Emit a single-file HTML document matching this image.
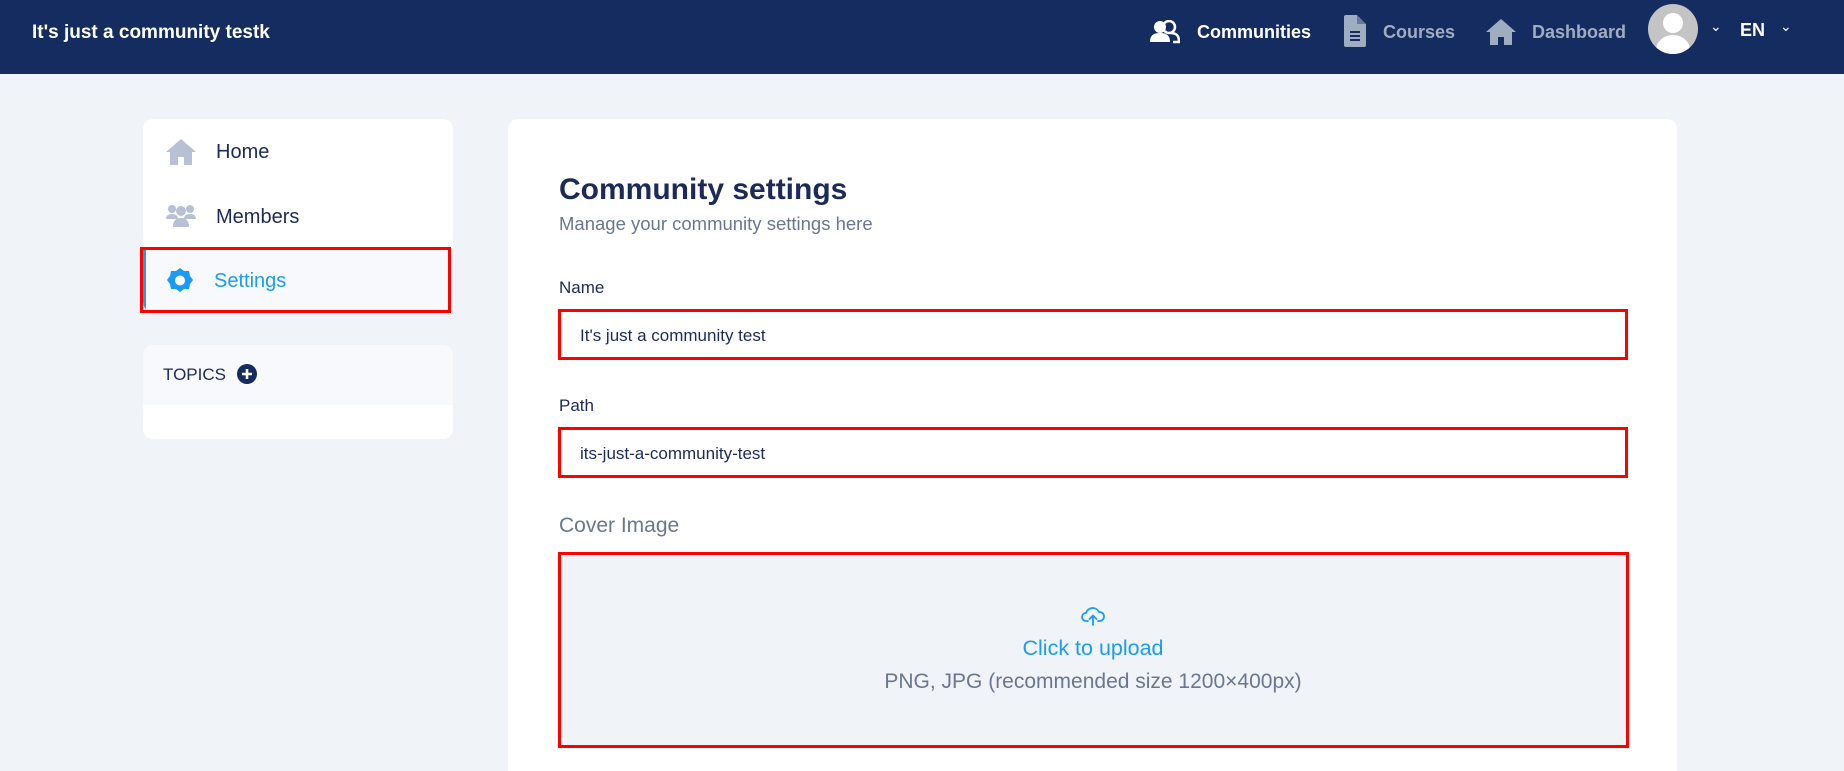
<!DOCTYPE html>
<html><head><meta charset="utf-8"><style>
*{box-sizing:border-box;margin:0;padding:0}
html,body{width:1844px;height:771px;overflow:hidden}
body{background:#f0f3f8;font-family:"Liberation Sans",sans-serif;position:relative;color:#1c2a5a}
.hdr{position:absolute;left:0;top:0;width:1844px;height:74px;background:#152c61}
.abs{position:absolute;white-space:nowrap}
.red{position:absolute;border:3px solid #f00}
</style></head><body>
<div class="hdr"></div>
<div class="abs" style="left:32px;top:22px;color:#fff;font-weight:bold;font-size:19px">It's just a community testk</div>
<svg class="abs" style="left:1150px;top:20px" width="30" height="24" viewBox="0 0 30 24"><circle cx="10" cy="7" r="6" fill="#fff"/><path d="M0 22c0-7 4-9 10-9s10 2 10 9z" fill="#fff"/><circle cx="19" cy="7" r="6" fill="none" stroke="#fff" stroke-width="2.5"/><path d="M20 13c6 0 9 2 9 9h-6" fill="none" stroke="#fff" stroke-width="2.5"/></svg>
<div class="abs" style="left:1197px;top:22px;color:#fff;font-weight:bold;font-size:18px">Communities</div>
<svg class="abs" style="left:1344px;top:15px" width="22" height="32" viewBox="0 0 22 32"><path d="M0 2q0-2 2-2h11l9 9v21q0 2-2 2H2q-2 0-2-2z" fill="#9eadc0"/><path d="M13 0v9h9" fill="#152c61" opacity=".4"/><path d="M6 17h10M6 21h10M6 25h10" stroke="#152c61" stroke-width="2"/></svg>
<div class="abs" style="left:1383px;top:22px;color:#9eadc0;font-weight:bold;font-size:18px">Courses</div>
<svg class="abs" style="left:1486px;top:18px" width="30" height="28" viewBox="0 0 30 28"><path d="M15 1L0 14h4v13h8v-8h6v8h8V14h4z" fill="#9eadc0"/></svg>
<div class="abs" style="left:1532px;top:22px;color:#9eadc0;font-weight:bold;font-size:18px">Dashboard</div>
<svg class="abs" style="left:1648px;top:4px" width="50" height="50" viewBox="0 0 50 50"><clipPath id="c"><circle cx="25" cy="25" r="25"/></clipPath><circle cx="25" cy="25" r="25" fill="#c4c4c4"/><g clip-path="url(#c)" fill="#fff"><circle cx="25" cy="19" r="10"/><ellipse cx="25" cy="46" rx="17" ry="15"/></g></svg>
<div class="abs" style="left:1710px;top:18px;color:#fff;font-size:14px">⌄</div>
<div class="abs" style="left:1740px;top:20px;color:#fff;font-weight:bold;font-size:18px">EN</div>
<div class="abs" style="left:1780px;top:18px;color:#fff;font-size:14px">⌄</div>

<div class="abs" style="left:143px;top:119px;width:310px;height:193px;background:#fff;border-radius:10px;overflow:hidden">
<div style="position:absolute;left:0;top:130px;width:310px;height:63px;background:#f7f9fc;border-left:3px solid #1a9bf5"></div>
</div>
<svg class="abs" style="left:166px;top:138px" width="30" height="28" viewBox="0 0 30 28"><path d="M15 1L0 14h4v13h8v-8h6v8h8V14h4z" fill="#b8c1d3"/></svg>
<div class="abs" style="left:216px;top:141px;font-size:20px;color:#1c2a5a">Home</div>
<svg class="abs" style="left:166px;top:204px" width="30" height="24" viewBox="0 0 30 24"><circle cx="6" cy="5" r="4" fill="#b8c1d3"/><circle cx="24" cy="5" r="4" fill="#b8c1d3"/><circle cx="15" cy="7" r="5" fill="#b8c1d3"/><path d="M0 15q0-5 6-5t6 5z M18 15q0-5 6-5t6 5z M7 23q0-9 8-9t8 9z" fill="#b8c1d3"/></svg>
<div class="abs" style="left:216px;top:206px;font-size:20px;color:#1c2a5a">Members</div>
<svg class="abs" style="left:166px;top:267px" width="28" height="28" viewBox="0 0 28 28"><path d="M14 1l4 3 5 0 1 5 3 4-3 4-1 5-5 0-4 3-4-3-5 0-1-5-3-4 3-4 1-5 5 0z" fill="#1a9bf5"/><circle cx="14" cy="13.5" r="5" fill="#fff"/></svg>
<div class="abs" style="left:214px;top:270px;font-size:20px;color:#1a9bf5">Settings</div>
<div class="red" style="left:140px;top:247px;width:311px;height:66px"></div>

<div class="abs" style="left:143px;top:345px;width:310px;height:94px;background:#fff;border-radius:10px;overflow:hidden"><div style="height:60px;background:#f7f9fc"></div></div>
<div class="abs" style="left:163px;top:365px;font-size:17px;color:#1c2a5a">TOPICS</div>
<svg class="abs" style="left:237px;top:364px" width="20" height="20" viewBox="0 0 20 20"><circle cx="10" cy="10" r="10" fill="#152c61"/><path d="M10 5v10M5 10h10" stroke="#fff" stroke-width="2.6"/></svg>

<div class="abs" style="left:508px;top:119px;width:1169px;height:660px;background:#fff;border-radius:10px 10px 0 0"></div>
<div class="abs" style="left:559px;top:173px;font-size:30px;font-weight:bold;color:#1c2a5a">Community settings</div>
<div class="abs" style="left:559px;top:213px;font-size:18.5px;color:#6b7690">Manage your community settings here</div>
<div class="abs" style="left:559px;top:278px;font-size:17px;color:#1c2a5a">Name</div>
<div class="red" style="left:558px;top:309px;width:1070px;height:51px"></div>
<div class="abs" style="left:580px;top:326px;font-size:17px;color:#1c2a5a">It's just a community test</div>
<div class="abs" style="left:559px;top:396px;font-size:17px;color:#1c2a5a">Path</div>
<div class="red" style="left:558px;top:427px;width:1070px;height:51px"></div>
<div class="abs" style="left:580px;top:444px;font-size:17px;color:#1c2a5a">its-just-a-community-test</div>
<div class="abs" style="left:559px;top:514px;font-size:21px;color:#6b7690">Cover Image</div>
<div class="abs" style="left:560px;top:554px;width:1067px;height:192px;background:#f0f3f8"></div>
<div class="red" style="left:558px;top:552px;width:1071px;height:196px"></div>
<svg class="abs" style="left:1081px;top:605px" width="24" height="22" viewBox="0 0 24 22"><path d="M7 16H5a4 4 0 0 1 0-8 7 7 0 0 1 13-1 4.5 4.5 0 0 1 1 9h-2M12 20v-9M8.5 14l3.5-3.5 3.5 3.5" fill="none" stroke="#1a9bf5" stroke-width="1.8" stroke-linecap="round" stroke-linejoin="round"/></svg>
<div class="abs" style="left:0;width:2186px;top:636px;text-align:center;font-size:21.5px;color:#1a9bf5">Click to upload</div>
<div class="abs" style="left:0;width:2186px;top:670px;text-align:center;font-size:21px;color:#6b7690">PNG, JPG (recommended size 1200×400px)</div>
</body></html>
